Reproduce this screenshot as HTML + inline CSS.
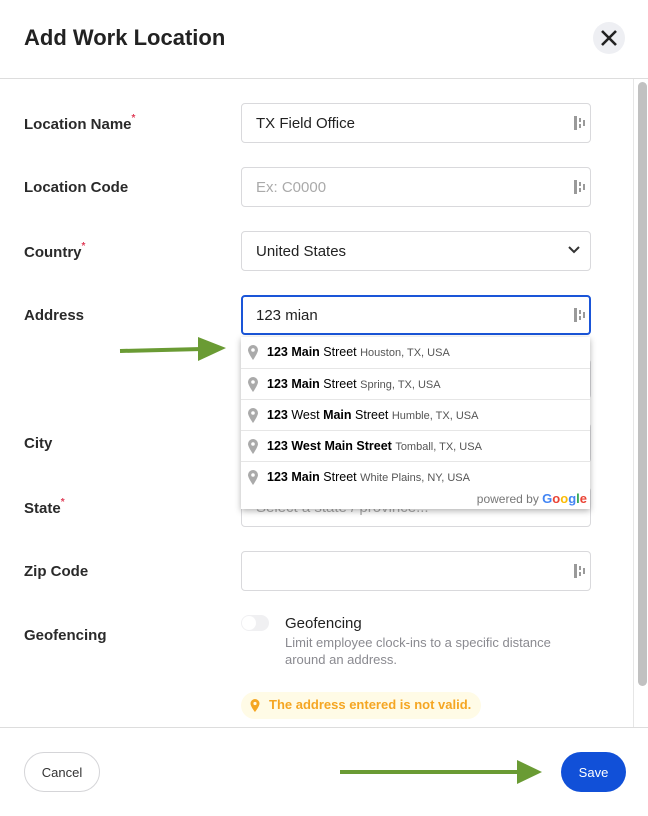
<!DOCTYPE html>
<html><head><style>
*{box-sizing:border-box;margin:0;padding:0}
body{width:648px;height:816px;background:#fff;font-family:"Liberation Sans",sans-serif;position:relative;overflow:hidden;color:#222}
.a{position:absolute}
.lbl{position:absolute;left:24px;font-size:15px;font-weight:bold;color:#2a2a2a}
.lbl sup{color:#e0405a;font-size:10px;position:relative;top:-2px}
.inp{position:absolute;left:241px;width:350px;height:40px;border:1px solid #d9d9dc;border-radius:4px;font-size:15px;padding:0 14px;line-height:40px;color:#222}
.ic{position:absolute;right:4px;top:12px;width:12px;height:14px}
.ic i{position:absolute;background:#9a9a9a}
.dd{position:absolute;left:241px;top:337px;width:349px;height:172px;background:#fff;box-shadow:0 2px 6px rgba(0,0,0,.3);font-size:12.5px}
.it{height:31px;border-top:1px solid #e6e6e6;line-height:30px;padding-left:26px;position:relative;white-space:nowrap;color:#000}
.it:first-child{border-top:none}
.it small{font-size:11px;color:#555}
.pin{position:absolute;left:7px;top:8px;width:10px;height:15px}
</style></head><body>
<div class="a" style="left:24px;top:25px;font-size:22px;font-weight:bold;color:#222">Add Work Location</div>
<div class="a" style="left:593px;top:22px;width:32px;height:32px;border-radius:50%;background:#eeeff3"></div>
<svg class="a" style="left:599px;top:28px" width="20" height="20"><path d="M3 3L17 17M17 3L3 17" stroke="#222" stroke-width="2.6"/></svg>
<div class="a" style="left:0;top:78px;width:648px;height:1px;background:#ddd"></div>
<div class="a" style="left:633px;top:79px;width:1px;height:648px;background:#e6e6e6"></div>
<div class="a" style="left:638px;top:82px;width:9px;height:604px;border-radius:5px;background:#c1c1c1"></div>

<div class="lbl" style="top:115px">Location Name<sup>*</sup></div>
<div class="inp" style="top:103px">TX Field Office<div class="ic"><i style="left:0;top:0;width:3px;height:14px"></i><i style="left:5px;top:2px;width:2px;height:4px"></i><i style="left:5px;top:8px;width:2px;height:4px"></i><i style="left:9px;top:4px;width:2px;height:6px"></i></div></div>
<div class="lbl" style="top:179px">Location Code</div>
<div class="inp" style="top:167px;color:#aaa">Ex: C0000<div class="ic"><i style="left:0;top:0;width:3px;height:14px"></i><i style="left:5px;top:2px;width:2px;height:4px"></i><i style="left:5px;top:8px;width:2px;height:4px"></i><i style="left:9px;top:4px;width:2px;height:6px"></i></div></div>
<div class="lbl" style="top:243px">Country<sup>*</sup></div>
<div class="inp" style="top:231px">United States<svg class="a" style="right:10px;top:14px" width="12" height="8"><path d="M1 1L6 6L11 1" stroke="#333" stroke-width="2" fill="none"/></svg></div>
<div class="lbl" style="top:307px">Address</div>
<div class="inp" style="top:295px;border:2px solid #1a55d8;line-height:38px;padding-left:13px">123 mian<div class="ic" style="right:3px;top:11px"><i style="left:0;top:0;width:3px;height:14px"></i><i style="left:5px;top:2px;width:2px;height:4px"></i><i style="left:5px;top:8px;width:2px;height:4px"></i><i style="left:9px;top:4px;width:2px;height:6px"></i></div></div>
<div class="inp" style="top:359px;height:40px"></div>
<div class="lbl" style="top:435px">City</div>
<div class="inp" style="top:423px"></div>
<div class="lbl" style="top:499px">State<sup>*</sup></div>
<div class="inp" style="top:487px;color:#aaa">Select a state / province...</div>
<div class="lbl" style="top:563px">Zip Code</div>
<div class="inp" style="top:551px"><div class="ic"><i style="left:0;top:0;width:3px;height:14px"></i><i style="left:5px;top:2px;width:2px;height:4px"></i><i style="left:5px;top:8px;width:2px;height:4px"></i><i style="left:9px;top:4px;width:2px;height:6px"></i></div></div>

<div class="dd">
<div class="it"><svg class="pin" viewBox="0 0 10 15"><path d="M5 0a5 5 0 0 1 5 5c0 3-5 10-5 10S0 8 0 5a5 5 0 0 1 5-5z" fill="#aaa"/><circle cx="5" cy="5" r="1.8" fill="#fff"/></svg><b>123 Main</b> Street <small>Houston, TX, USA</small></div>
<div class="it"><svg class="pin" viewBox="0 0 10 15"><path d="M5 0a5 5 0 0 1 5 5c0 3-5 10-5 10S0 8 0 5a5 5 0 0 1 5-5z" fill="#aaa"/><circle cx="5" cy="5" r="1.8" fill="#fff"/></svg><b>123 Main</b> Street <small>Spring, TX, USA</small></div>
<div class="it"><svg class="pin" viewBox="0 0 10 15"><path d="M5 0a5 5 0 0 1 5 5c0 3-5 10-5 10S0 8 0 5a5 5 0 0 1 5-5z" fill="#aaa"/><circle cx="5" cy="5" r="1.8" fill="#fff"/></svg><b>123</b> West <b>Main</b> Street <small>Humble, TX, USA</small></div>
<div class="it"><svg class="pin" viewBox="0 0 10 15"><path d="M5 0a5 5 0 0 1 5 5c0 3-5 10-5 10S0 8 0 5a5 5 0 0 1 5-5z" fill="#aaa"/><circle cx="5" cy="5" r="1.8" fill="#fff"/></svg><b>123 West Main Street</b> <small>Tomball, TX, USA</small></div>
<div class="it"><svg class="pin" viewBox="0 0 10 15"><path d="M5 0a5 5 0 0 1 5 5c0 3-5 10-5 10S0 8 0 5a5 5 0 0 1 5-5z" fill="#aaa"/><circle cx="5" cy="5" r="1.8" fill="#fff"/></svg><b>123 Main</b> Street <small>White Plains, NY, USA</small></div>
<div class="a" style="right:3px;top:154px;font-size:12px;color:#777">powered by <span style="font-size:13px;font-weight:bold"><span style="color:#4285f4">G</span><span style="color:#ea4335">o</span><span style="color:#fbbc05">o</span><span style="color:#4285f4">g</span><span style="color:#34a853">l</span><span style="color:#ea4335">e</span></span></div>
</div>

<div class="lbl" style="top:627px">Geofencing</div>
<div class="a" style="left:241px;top:615px;width:28px;height:16px;border-radius:8px;background:#f0f0f2"></div>
<div class="a" style="left:242px;top:616px;width:14px;height:14px;border-radius:50%;background:#fff"></div>
<div class="a" style="left:285px;top:615px;font-size:15px;color:#222">Geofencing</div>
<div class="a" style="left:285px;top:634px;font-size:13px;color:#8a8a90;line-height:17px;width:300px">Limit employee clock-ins to a specific distance around an address.</div>
<div class="a" style="left:241px;top:692px;width:240px;height:27px;border-radius:14px;background:#fffbe6"></div>
<svg class="a" style="left:250px;top:699px" width="10" height="13" viewBox="0 0 10 13"><path d="M5 0a4.5 4.5 0 0 1 4.5 4.5C9.5 7.5 5 13 5 13S.5 7.5.5 4.5A4.5 4.5 0 0 1 5 0z" fill="#f5a623"/><circle cx="5" cy="4.5" r="1.6" fill="#fffbe6"/></svg>
<div class="a" style="left:269px;top:697px;font-size:13px;font-weight:bold;color:#f5a623">The address entered is not valid.</div>

<div class="a" style="left:0;top:727px;width:648px;height:1px;background:#ddd"></div>
<div class="a" style="left:24px;top:752px;width:76px;height:40px;border:1px solid #d5d5d8;border-radius:20px;font-size:13px;line-height:40px;text-align:center;color:#333">Cancel</div>
<div class="a" style="left:561px;top:752px;width:65px;height:40px;border-radius:20px;background:#1150d8;font-size:13px;line-height:42px;text-align:center;color:#fff">Save</div>

<svg class="a" style="left:0;top:0" width="648" height="816">
<path d="M120 351L202 349" stroke="#6a9b34" stroke-width="4"/><path d="M198 337L226 348L198 361z" fill="#6a9b34"/>
<path d="M340 772L518 772" stroke="#6a9b34" stroke-width="4"/><path d="M517 760L542 772L517 784z" fill="#6a9b34"/>
</svg>
</body></html>
